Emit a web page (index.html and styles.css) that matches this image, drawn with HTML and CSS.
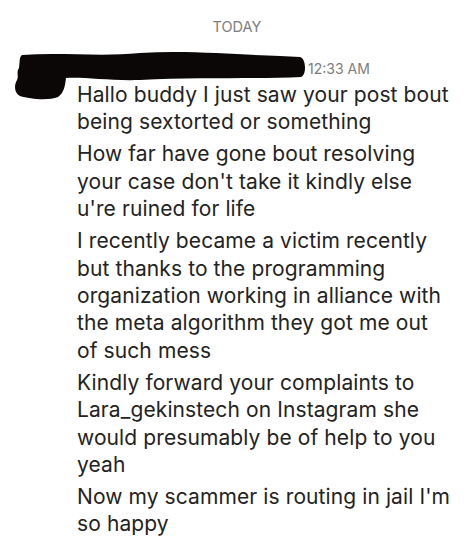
FILE: index.html
```html
<!DOCTYPE html>
<html>
<head>
<meta charset="utf-8">
<link rel="stylesheet" href="styles.css">
</head>
<body>
<div class="chat">
  <div class="day">TODAY</div>
  <div class="group">
    <div class="meta"><span class="name"></span><span class="time">12:33 AM</span></div>
    <div class="msgs">
      <p class="msg">Hallo buddy I just saw your post bout<br>being sextorted or something</p>
      <p class="msg">How far have gone bout resolving<br>your case don't take it kindly else<br>u're ruined for life</p>
      <p class="msg">I recently became a victim recently<br>but thanks to the programming<br>organization working in alliance with<br>the meta algorithm they got me out<br>of such mess</p>
      <p class="msg">Kindly forward your complaints to<br>Lara_gekinstech on Instagram she<br>would presumably be of help to you<br>yeah</p>
      <p class="msg">Now my scammer is routing in jail I'm<br>so happy</p>
    </div>
  </div>
  <svg class="redact" viewBox="0 0 474 110" width="474" height="110" aria-hidden="true">
    <path d="M22 55 C60 52 100 57 140 53 C190 50 240 55 280 56 L300 57 C306 58 307 75 301 77 C260 79 200 77 140 80 C110 81 85 77 66 78 C65 86 64 93 58 97 C48 101 30 99 20 96 C14 93 14 85 17 80 C19 76 16 72 19 68 C20 62 19 57 22 55 Z" fill="#0c0707"/>
  </svg>
</div>
</body>
</html>
```
FILE: styles.css
```css
html, body {
  margin: 0;
  padding: 0;
  background: #ffffff;
}
body {
  font-family: Inter, "Liberation Sans", sans-serif;
  width: 474px;
  height: 545px;
  overflow: hidden;
}
.chat {
  position: relative;
  padding-top: 17px;
}
.day {
  text-align: center;
  font-size: 14.5px;
  line-height: 20px;
  color: #7d7d7d;
}
.group {
  padding-left: 77px;
  margin-top: 23px;
}
.meta {
  display: flex;
  align-items: baseline;
}
.name {
  width: 231px;
}
.time {
  font-size: 14px;
  line-height: 18px;
  color: #7d7d7d;
}
.msgs {
  margin-top: 3px;
  width: 397px;
  display: flex;
  flex-direction: column;
  gap: 4.6px;
}
.msg {
  margin: 0;
  font-size: 21px;
  letter-spacing: 0.1px;
  line-height: 27.4px;
  color: #232323;
  white-space: nowrap;
}
.redact {
  position: absolute;
  left: 0;
  top: 0;
}
```
